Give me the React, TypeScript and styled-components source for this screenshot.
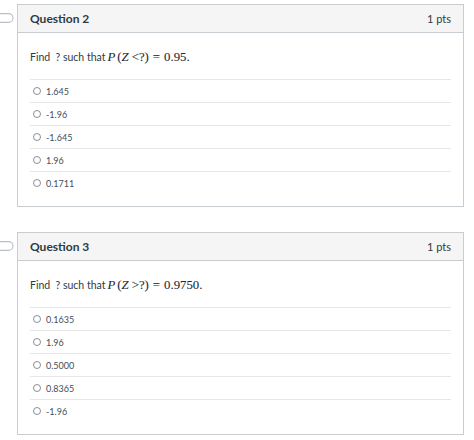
import styled, { createGlobalStyle } from 'styled-components';

const GlobalStyle = createGlobalStyle`
  html, body {
    margin: 0;
    padding: 0;
    background: #ffffff;
  }
  body {
    font-family: Lato, "Noto Sans", sans-serif;
    color: #2d3b45;
  }
`;

interface Question {
  title: string;
  points: string;
  relation: string;
  value: string;
  answers: string[];
}

const questions: Question[] = [
  {
    title: 'Question 2',
    points: '1 pts',
    relation: '<',
    value: '0.95',
    answers: ['1.645', '-1.96', '-1.645', '1.96', '0.1711'],
  },
  {
    title: 'Question 3',
    points: '1 pts',
    relation: '>',
    value: '0.9750',
    answers: ['0.1635', '1.96', '0.5000', '0.8365', '-1.96'],
  },
];

const Page = styled.div`
  display: flex;
  flex-direction: column;
  gap: 25px;
  padding: 4px 10px 0 0;
`;

const QuestionRow = styled.div`
  display: flex;
  align-items: flex-start;
`;

const FlagSlot = styled.div`
  width: 17px;
  flex: none;
  display: flex;
  padding-top: 9px;
`;

const Card = styled.div`
  flex: 1;
  border: 1px solid #c7cdd1;
  background: #ffffff;
`;

const Header = styled.div`
  height: 27px;
  display: flex;
  align-items: center;
  justify-content: space-between;
  padding: 0 12px 0 12px;
  background: #f5f5f5;
  border-bottom: 1px solid #c7cdd1;
`;

const Title = styled.span`
  font-size: 12px;
  font-weight: 700;
  color: #2d3b45;
`;

const Points = styled.span`
  font-size: 11px;
  color: #2d3b45;
`;

const Body = styled.div`
  padding: 16px 12px 12px 12px;
`;

const Prompt = styled.div`
  display: flex;
  align-items: baseline;
  height: 16px;
  line-height: 16px;
  font-size: 10.5px;
  margin-bottom: 14px;
  white-space: pre;
`;

const MathText = styled.span`
  font-family: "Liberation Serif", "Times New Roman", serif;
  font-size: 12.8px;
  margin-left: 2px;
  color: #1f2a33;
  -webkit-text-stroke: 0.1px #1f2a33;
`;

const Var = styled.i`
  font-style: italic;
`;

const Rel = styled.span<{ $left?: number; $right?: number }>`
  padding-left: ${({ $left }) => $left ?? 0}px;
  padding-right: ${({ $right }) => $right ?? 0}px;
`;

const AnswerList = styled.div`
  display: flex;
  flex-direction: column;
`;

const Answer = styled.label`
  height: 22px;
  display: flex;
  align-items: center;
  gap: 5px;
  padding-left: 3px;
  border-top: 1px solid #e4e6e8;
  font-size: 9px;
  color: #3f4e59;
`;

const Radio = styled.span`
  width: 6px;
  height: 6px;
  border-radius: 50%;
  border: 1px solid #8a8f93;
  background: #ffffff;
  flex: none;
`;

const Flag = () => (
  <svg width="14" height="10" viewBox="0 0 14 10">
    <path
      d="M -4 0.6 H 8.6 A 4.4 4.4 0 0 1 8.6 9.4 H -4"
      fill="#ffffff"
      stroke="#b9bfc4"
      strokeWidth="1.1"
    />
  </svg>
);

const QuestionCard: React.FC<{ q: Question }> = ({ q }) => (
  <QuestionRow>
    <FlagSlot>
      <Flag />
    </FlagSlot>
    <Card>
      <Header>
        <Title>{q.title}</Title>
        <Points>{q.points}</Points>
      </Header>
      <Body>
        <Prompt>
          {'Find  ? such that'}
          <MathText>
            <Var>P</Var>
            <Rel $left={2}>(</Rel>
            <Var>Z</Var>
            <Rel $left={3}>{q.relation}</Rel>?)
            <Rel $left={4} $right={4}>=</Rel>
            {q.value}.
          </MathText>
        </Prompt>
        <AnswerList>
          {q.answers.map((a) => (
            <Answer key={a}>
              <Radio />
              {a}
            </Answer>
          ))}
        </AnswerList>
      </Body>
    </Card>
  </QuestionRow>
);

export default function App() {
  return (
    <>
      <GlobalStyle />
      <Page>
        {questions.map((q) => (
          <QuestionCard key={q.title} q={q} />
        ))}
      </Page>
    </>
  );
}
